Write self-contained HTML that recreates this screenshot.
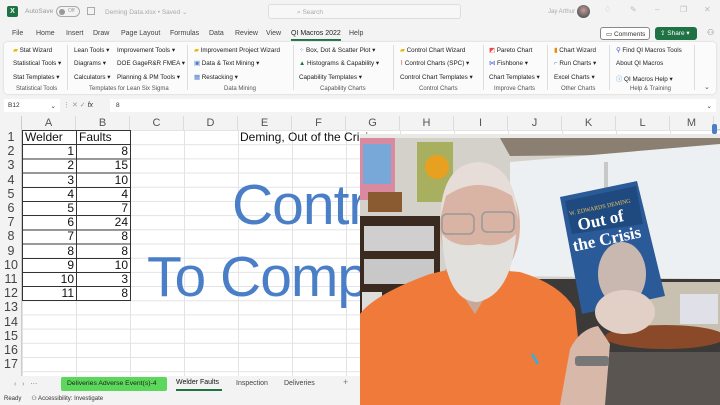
<!DOCTYPE html>
<html><head><meta charset="utf-8"><style>
*{margin:0;padding:0;box-sizing:border-box}
body{width:720px;height:405px;overflow:hidden;background:#f3f3f3;font-family:"Liberation Sans",sans-serif;position:relative;color:#333}
.a{position:absolute;white-space:nowrap}
.t{font-size:7px;color:#444}
.r{font-size:6.3px;color:#222}
.g{font-size:6px;color:#555}
.grid{position:absolute;left:0;top:116px;width:720px;height:260px;background:#fff}
.ch{position:absolute;top:116px;height:14px;background:#f3f3f3;font-size:11px;color:#555;text-align:center;line-height:14px;border-right:1px solid #dcdcdc}
.rh{position:absolute;left:0;width:22px;font-size:12.5px;color:#444;text-align:center;line-height:14.2px}
.c{position:absolute;font-size:12px;color:#111;line-height:14px}
</style></head><body>
<div class="a" style="left:7px;top:6px;width:11px;height:11px;background:#1f7244;border-radius:2px;color:#fff;font-size:7px;text-align:center;line-height:11px;font-weight:bold">X</div>
<div class="a t" style="left:25px;top:8px;color:#999;font-size:6.5px">AutoSave</div>
<div class="a" style="left:56px;top:6px;width:24px;height:11px;border:1px solid #aaa;border-radius:6px;font-size:5px;color:#999;line-height:9px;padding-left:11px">Off<div style="position:absolute;left:2px;top:2px;width:6px;height:6px;background:#999;border-radius:50%"></div></div>
<div class="a" style="left:87px;top:7px;width:8px;height:8px;border:1px solid #aaa"></div>
<div class="a t" style="left:105px;top:8px;color:#aaa;font-size:6.5px">Deming Data.xlsx • Saved ⌄</div>
<div class="a" style="left:268px;top:4px;width:193px;height:15px;border:1px solid #ddd;background:#f7f7f7;border-radius:3px;font-size:6.5px;color:#aaa;padding:4px 0 0 28px">⌕ Search</div>
<div class="a t" style="left:548px;top:9px;color:#aaa;font-size:6px">Jay Arthur</div>
<div class="a" style="left:577px;top:5px;width:13px;height:13px;border-radius:50%;background:radial-gradient(circle at 50% 40%,#c99 0,#666 60%,#335 100%)"></div>
<div class="a" style="left:604px;top:5px;color:#bbb;font-size:8px">♢</div>
<div class="a" style="left:630px;top:5px;color:#bbb;font-size:8px">✎</div>
<div class="a" style="left:655px;top:5px;color:#bbb;font-size:8px">–</div>
<div class="a" style="left:680px;top:5px;color:#bbb;font-size:8px">❐</div>
<div class="a" style="left:704px;top:5px;color:#bbb;font-size:8px">✕</div>
<div class="a t" style="left:12px;top:30px">File</div>
<div class="a t" style="left:36px;top:30px">Home</div>
<div class="a t" style="left:66px;top:30px">Insert</div>
<div class="a t" style="left:93px;top:30px">Draw</div>
<div class="a t" style="left:121px;top:30px">Page Layout</div>
<div class="a t" style="left:170px;top:30px">Formulas</div>
<div class="a t" style="left:209px;top:30px">Data</div>
<div class="a t" style="left:235px;top:30px">Review</div>
<div class="a t" style="left:266px;top:30px">View</div>
<div class="a t" style="left:291px;top:30px;color:#222">QI Macros 2022</div>
<div class="a" style="left:291px;top:39px;width:50px;height:1.5px;background:#1f7244"></div>
<div class="a t" style="left:349px;top:30px">Help</div>
<div class="a" style="left:600px;top:27px;width:50px;height:13px;border:1px solid #888;border-radius:3px;background:#fff;font-size:6.5px;color:#333;padding:2px 0 0 5px">▭ Comments</div>
<div class="a" style="left:655px;top:27px;width:42px;height:13px;background:#1f7244;border-radius:3px;font-size:6.5px;color:#fff;padding:2px 0 0 5px">⇪ Share ▾</div>
<div class="a" style="left:707px;top:28px;color:#777;font-size:8px">⚇</div>
<div class="a" style="left:4px;top:42px;width:712px;height:52px;background:#fbfbfb;border-radius:4px;box-shadow:0 0 2px #ccc"></div>
<div class="a" style="left:67px;top:45px;width:1px;height:45px;background:#ddd"></div>
<div class="a" style="left:187px;top:45px;width:1px;height:45px;background:#ddd"></div>
<div class="a" style="left:293px;top:45px;width:1px;height:45px;background:#ddd"></div>
<div class="a" style="left:393px;top:45px;width:1px;height:45px;background:#ddd"></div>
<div class="a" style="left:483px;top:45px;width:1px;height:45px;background:#ddd"></div>
<div class="a" style="left:547px;top:45px;width:1px;height:45px;background:#ddd"></div>
<div class="a" style="left:609px;top:45px;width:1px;height:45px;background:#ddd"></div>
<div class="a" style="left:694px;top:45px;width:1px;height:45px;background:#ddd"></div>
<div class="a r" style="left:13px;top:47px"><span style="color:#e8b800">▰</span> Stat Wizard</div>
<div class="a r" style="left:13px;top:60px">Statistical Tools ▾</div>
<div class="a r" style="left:13px;top:74px">Stat Templates ▾</div>
<div class="a g" style="left:16px;top:86px">Statistical Tools</div>
<div class="a r" style="left:74px;top:47px">Lean Tools ▾</div>
<div class="a r" style="left:74px;top:60px">Diagrams ▾</div>
<div class="a r" style="left:74px;top:74px">Calculators ▾</div>
<div class="a r" style="left:117px;top:47px">Improvement Tools ▾</div>
<div class="a r" style="left:117px;top:60px">DOE GageR&amp;R FMEA ▾</div>
<div class="a r" style="left:117px;top:74px">Planning &amp; PM Tools ▾</div>
<div class="a g" style="left:89px;top:86px">Templates for Lean Six Sigma</div>
<div class="a r" style="left:194px;top:47px"><span style="color:#e8b800">▰</span> Improvement Project Wizard</div>
<div class="a r" style="left:194px;top:60px"><span style="color:#4a7fc7">▣</span> Data &amp; Text Mining ▾</div>
<div class="a r" style="left:194px;top:74px"><span style="color:#4a7fc7">▦</span> Restacking ▾</div>
<div class="a g" style="left:224px;top:86px">Data Mining</div>
<div class="a r" style="left:299px;top:47px"><span style="color:#4a7fc7">⁘</span> Box, Dot &amp; Scatter Plot ▾</div>
<div class="a r" style="left:299px;top:60px"><span style="color:#1f7244">▲</span> Histograms &amp; Capability ▾</div>
<div class="a r" style="left:299px;top:74px">Capability Templates ▾</div>
<div class="a g" style="left:320px;top:86px">Capability Charts</div>
<div class="a r" style="left:400px;top:47px"><span style="color:#e8b800">▰</span> Control Chart Wizard</div>
<div class="a r" style="left:400px;top:60px"><span style="color:#c55">⌇</span> Control Charts (SPC) ▾</div>
<div class="a r" style="left:400px;top:74px">Control Chart Templates ▾</div>
<div class="a g" style="left:419px;top:86px">Control Charts</div>
<div class="a r" style="left:489px;top:47px"><span style="color:#e44">◩</span> Pareto Chart</div>
<div class="a r" style="left:489px;top:60px"><span style="color:#46c">⋈</span> Fishbone ▾</div>
<div class="a r" style="left:489px;top:74px">Chart Templates ▾</div>
<div class="a g" style="left:494px;top:86px">Improve Charts</div>
<div class="a r" style="left:554px;top:47px"><span style="color:#e80">▮</span> Chart Wizard</div>
<div class="a r" style="left:554px;top:60px"><span style="color:#46c">⌐</span> Run Charts ▾</div>
<div class="a r" style="left:554px;top:74px">Excel Charts ▾</div>
<div class="a g" style="left:561px;top:86px">Other Charts</div>
<div class="a r" style="left:616px;top:47px"><span style="color:#46c">⚲</span> Find QI Macros Tools</div>
<div class="a r" style="left:616px;top:60px">About QI Macros</div>
<div class="a r" style="left:616px;top:74px"><span style="color:#3a8ed8">ⓘ</span> QI Macros Help ▾</div>
<div class="a g" style="left:630px;top:86px">Help &amp; Training</div>
<div class="a" style="left:704px;top:83px;font-size:7px;color:#555">⌄</div>
<div class="a" style="left:4px;top:99px;width:56px;height:13px;background:#fff;font-size:6.5px;padding:3px 0 0 4px;color:#333">B12<span style="float:right;margin-right:4px">⌄</span></div>
<div class="a" style="left:63px;top:101px;font-size:7px;color:#999">⋮ ✕ ✓ <i style="color:#333">fx</i></div>
<div class="a" style="left:110px;top:99px;width:606px;height:13px;background:#fff;font-size:6.5px;padding:3px 0 0 6px;color:#333">8<span style="float:right;margin-right:4px">⌄</span></div>
<div class="grid" style="background-image:linear-gradient(#e3e3e3 1px,transparent 1px),linear-gradient(90deg,#e3e3e3 1px,transparent 1px);background-size:54px 14.2px,54px 14.2px;background-position:22px 14px,22px 0"></div>
<div class="a" style="left:0;top:116px;width:720px;height:14px;background:#f3f3f3;border-bottom:1px solid #ccc"></div>
<div class="a" style="left:0;top:116px;width:22px;height:260px;background:#f3f3f3;border-right:1px solid #ccc"></div>
<div class="ch" style="left:22px;width:54px">A</div>
<div class="ch" style="left:76px;width:54px">B</div>
<div class="ch" style="left:130px;width:54px">C</div>
<div class="ch" style="left:184px;width:54px">D</div>
<div class="ch" style="left:238px;width:54px">E</div>
<div class="ch" style="left:292px;width:54px">F</div>
<div class="ch" style="left:346px;width:54px">G</div>
<div class="ch" style="left:400px;width:54px">H</div>
<div class="ch" style="left:454px;width:54px">I</div>
<div class="ch" style="left:508px;width:54px">J</div>
<div class="ch" style="left:562px;width:54px">K</div>
<div class="ch" style="left:616px;width:54px">L</div>
<div class="ch" style="left:670px;width:44px">M</div>
<div class="a" style="left:22px;top:130px;width:109px;height:171px;border:1px solid #333;background:linear-gradient(90deg,transparent 53px,#333 53px,#333 54px,transparent 54px),repeating-linear-gradient(transparent 0,transparent 13.2px,#333 13.2px,#333 14.2px)"></div>
<div class="a" style="top:130px;left:0">
<div class="rh" style="top:0">1</div><div class="rh" style="top:14.2px">2</div><div class="rh" style="top:28.4px">3</div><div class="rh" style="top:42.6px">4</div><div class="rh" style="top:56.8px">5</div><div class="rh" style="top:71px">6</div><div class="rh" style="top:85.2px">7</div><div class="rh" style="top:99.4px">8</div><div class="rh" style="top:113.6px">9</div><div class="rh" style="top:127.8px">10</div><div class="rh" style="top:142px">11</div><div class="rh" style="top:156.2px">12</div><div class="rh" style="top:170.4px">13</div><div class="rh" style="top:184.6px">14</div><div class="rh" style="top:198.8px">15</div><div class="rh" style="top:213px">16</div><div class="rh" style="top:227.2px">17</div>
<div class="c" style="left:25px;top:0">Welder</div><div class="c" style="left:79px;top:0">Faults</div>
<div class="c" style="left:240px;top:0">Deming, Out of the Crisis</div>
<div class="c" style="left:22px;top:14.2px;width:52px;text-align:right;line-height:14.2px">1<br>2<br>3<br>4<br>5<br>6<br>7<br>8<br>9<br>10<br>11</div>
<div class="c" style="left:76px;top:14.2px;width:52px;text-align:right;line-height:14.2px">8<br>15<br>10<br>4<br>7<br>24<br>8<br>8<br>10<br>3<br>8</div>
</div>
<div class="a" style="left:232px;top:172px;font-size:57px;color:#4a7fc7;line-height:66px;letter-spacing:-1px">Contr</div>
<div class="a" style="left:147px;top:244px;font-size:57px;color:#4a7fc7;line-height:66px;letter-spacing:-1px">To Comp</div>
<div class="a" style="left:712px;top:124px;width:5px;height:10px;background:#4a7fc7;border-radius:2px"></div>
<div class="a" style="left:0;top:376px;width:360px;height:17px;background:#f3f3f3"></div>
<div class="a t" style="left:14px;top:380px;color:#888">‹ &nbsp; › &nbsp; ⋯</div>
<div class="a" style="left:61px;top:377px;width:106px;height:14px;background:#5bd85b;border-radius:2px;font-size:6.8px;color:#222;padding:3px 0 0 6px">Deliveries Adverse Event(s)-4</div>
<div class="a" style="left:176px;top:379px;font-size:7px;color:#111">Welder Faults</div>
<div class="a" style="left:176px;top:389px;width:46px;height:1.5px;background:#1f7244"></div>
<div class="a t" style="left:236px;top:380px">Inspection</div>
<div class="a t" style="left:284px;top:380px">Deliveries</div>
<div class="a" style="left:343px;top:377px;color:#777;font-size:9px">+</div>
<div class="a" style="left:4px;top:395px;font-size:6px;color:#333">Ready &nbsp;&nbsp;&nbsp;&nbsp; ⚇ Accessibility: Investigate</div>
<svg class="a" style="left:360px;top:134px" width="360" height="271" viewBox="0 0 360 271">
<rect width="360" height="271" fill="#d4d1ca"/>
<rect x="0" y="0" width="360" height="4" fill="#e9e9e6"/>
<polygon points="140,4 360,4 360,20 150,22" fill="#8a7f70"/>
<rect x="0" y="4" width="35" height="62" fill="#d98aa0"/>
<rect x="3" y="10" width="28" height="40" fill="#78a8d8"/>
<rect x="57" y="8" width="36" height="60" fill="#a8b060"/>
<circle cx="77" cy="33" r="12" fill="#e8a020"/>
<polygon points="150,28 360,10 360,145 150,142" fill="#ecf0f2"/>
<rect x="244" y="28" width="4" height="110" fill="#c8c8c8"/>
<rect x="8" y="58" width="34" height="20" fill="#8a5a30"/>
<rect x="0" y="82" width="80" height="120" fill="#3a2a20"/>
<rect x="4" y="92" width="70" height="25" fill="#cfcfcf"/>
<rect x="4" y="125" width="70" height="25" fill="#c8c8c8"/>
<rect x="2" y="158" width="20" height="40" fill="#ddd"/>
<rect x="160" y="145" width="200" height="126" fill="#3c3a38"/>
<rect x="270" y="148" width="90" height="52" fill="#c8c0b0"/>
<ellipse cx="305" cy="203" rx="60" ry="12" fill="#8a4a2a"/>
<rect x="320" y="160" width="38" height="30" fill="#e0e0e8"/>
<rect x="210" y="218" width="150" height="53" fill="#5a5550"/>
<path d="M0,271 L0,180 Q15,160 70,140 L100,133 L160,138 Q200,150 215,175 L225,271 Z" fill="#f07a3a"/>
<path d="M85,135 L115,180 L140,138 Z" fill="#c9a898"/>
<ellipse cx="120" cy="92" rx="40" ry="58" fill="#d9b4a4"/>
<path d="M80,85 Q82,30 118,28 Q155,30 158,85 L152,62 Q118,40 86,62 Z" fill="#e6ddd8"/>
<path d="M82,100 Q85,168 118,168 Q152,160 156,100 Q142,115 119,110 Q95,115 82,100 Z" fill="#e2e0dc"/>
<rect x="82" y="80" width="32" height="20" rx="5" fill="none" stroke="#999" stroke-width="1.5"/>
<rect x="122" y="78" width="32" height="20" rx="5" fill="none" stroke="#999" stroke-width="1.5"/>
<path d="M200,271 L210,215 Q220,195 238,192 L250,210 L245,271 Z" fill="#d8b8a8"/>
<polygon points="200,63 277,47 305,162 222,180" fill="#2a5a98"/>
<polygon points="205,67 276,52 283,90 212,100" fill="#1f4a80"/>
<ellipse cx="262" cy="140" rx="24" ry="32" fill="#c9b8b0"/>
<text x="218" y="92" font-family="Liberation Serif,serif" font-size="17" font-weight="bold" fill="#fff" transform="rotate(-12 240 90)">Out of</text>
<text x="213" y="112" font-family="Liberation Serif,serif" font-size="17" font-weight="bold" fill="#fff" transform="rotate(-12 240 110)">the Crisis</text>
<text x="209" y="75" font-family="Liberation Serif,serif" font-size="6" fill="#e8c060" transform="rotate(-12 240 75)">W. EDWARDS DEMING</text>
<ellipse cx="265" cy="178" rx="30" ry="22" fill="#e2cfc6"/>
<rect x="215" y="222" width="34" height="10" rx="3" fill="#777"/>
<path d="M172,220 L178,230" stroke="#4aa8c8" stroke-width="3"/>
</svg>
</body></html>
